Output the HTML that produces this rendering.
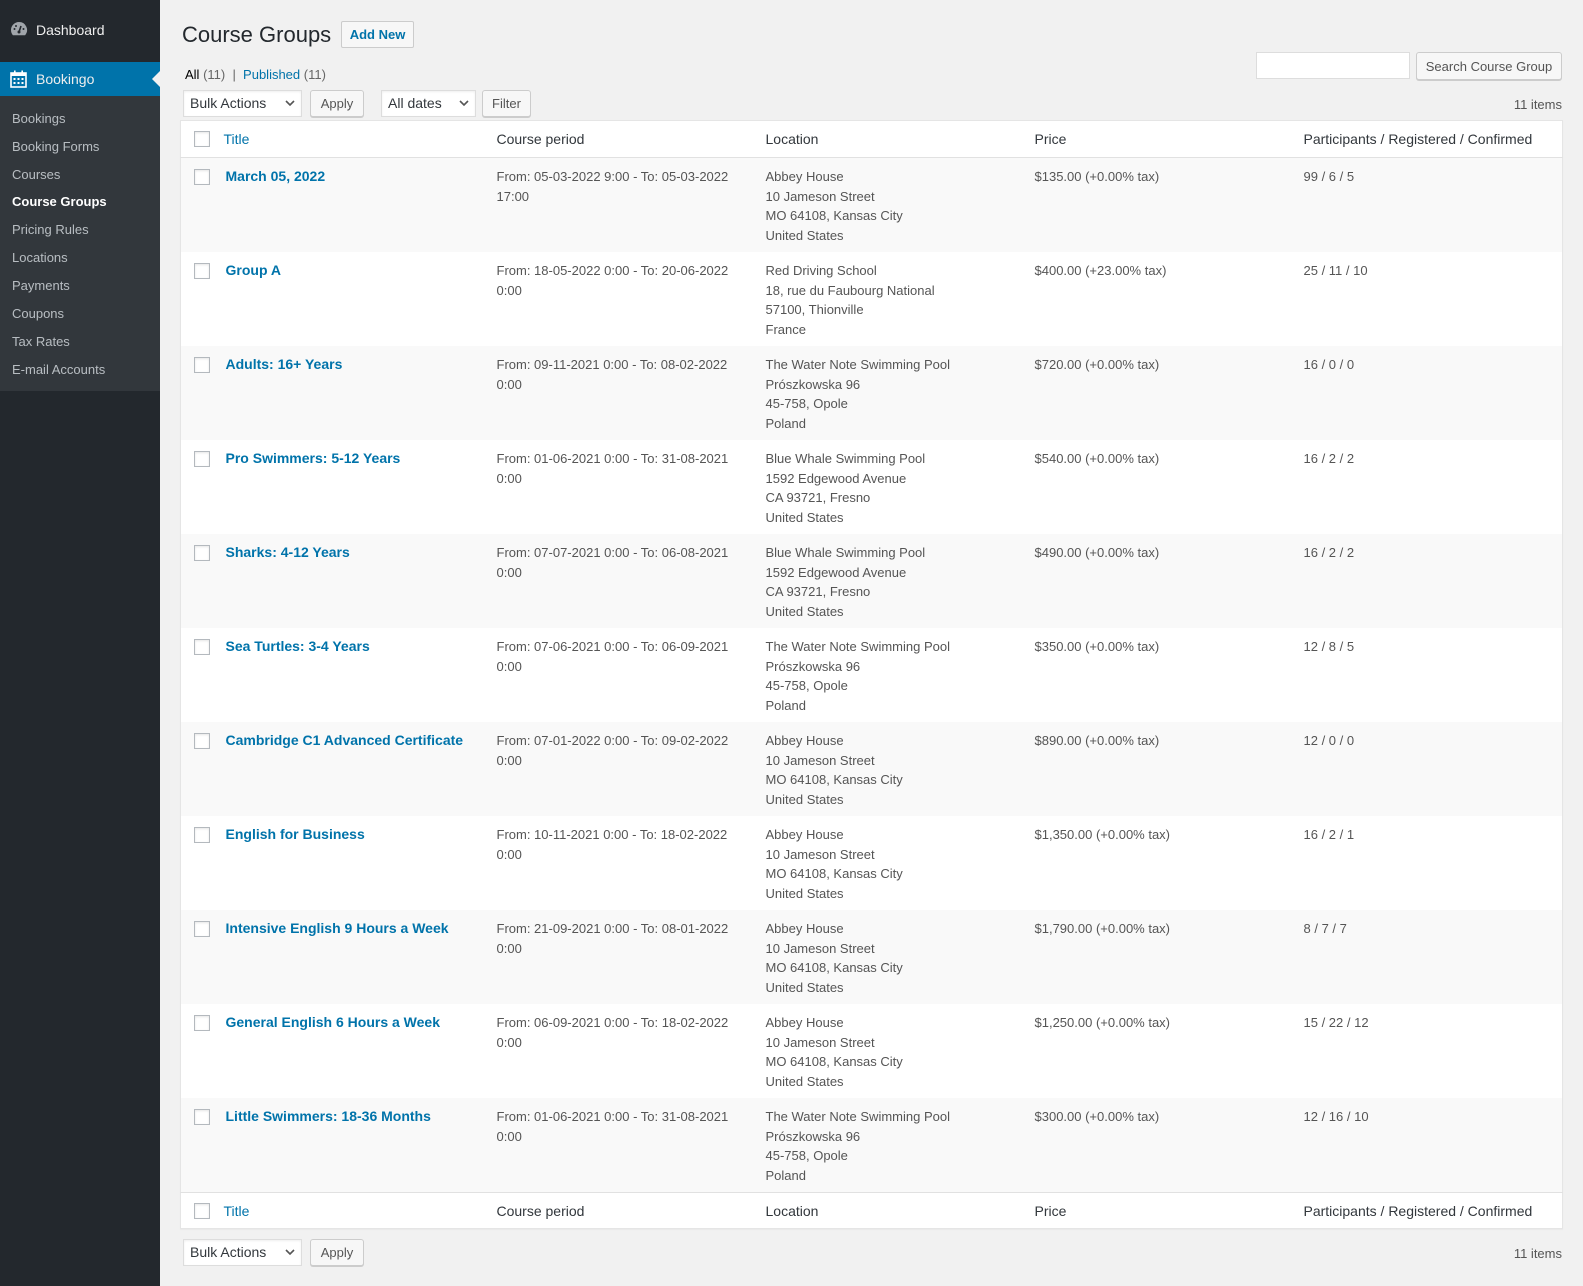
<!DOCTYPE html>
<html><head><meta charset="utf-8"><style>
*{box-sizing:border-box;margin:0;padding:0}
body{width:1583px;height:1286px;background:#f1f1f1;font-family:"Liberation Sans",sans-serif;font-size:13px;color:#444;position:relative;overflow:hidden}
#side{position:absolute;left:0;top:0;width:160px;height:1286px;background:#23282d}
.mi{position:absolute;left:0;width:160px;color:#eee;font-size:14px}
.sub{position:absolute;left:0;top:96px;width:160px;height:295px;background:#32373c}
.sub div{position:absolute;left:12px;color:rgba(240,245,250,.7);font-size:13px}
.sub div.cur{color:#fff;font-weight:bold}
a{color:#0073aa;text-decoration:none}
.abs{position:absolute}
.btn{position:absolute;background:#f7f7f7;border:1px solid #ccc;border-radius:3px;box-shadow:0 1px 0 #ccc;color:#555;font-size:13px;text-align:center;line-height:25px}
.sel{position:absolute;background:#fff;border:1px solid #ddd;box-shadow:inset 0 1px 2px rgba(0,0,0,.07);color:#32373c;font-size:14px;padding-left:6px;line-height:25px}
.sel svg{position:absolute;right:6px;top:9px}
table{position:absolute;left:180px;top:120px;width:1383px;border-collapse:collapse;background:#fff;border:1px solid #e5e5e5;box-shadow:0 1px 1px rgba(0,0,0,.04);table-layout:fixed}
th{font-weight:normal;text-align:left;font-size:14px;color:#32373c;height:37px;padding:0 10px;vertical-align:middle}
thead th{border-bottom:1px solid #e1e1e1}
tfoot th{border-top:1px solid #e1e1e1;height:36px}
td{vertical-align:top;padding:9px 10px 7px;line-height:19.5px;height:94px;font-size:13px;color:#555}
tbody tr:nth-child(odd){background:#f9f9f9}
th.cb,td.cb{padding:0 0 0 13px}
th.tt{padding-left:8px}
.cbx{width:16px;height:16px;border:1px solid #b4b9be;background:#fff;box-shadow:inset 0 1px 2px rgba(0,0,0,.1);display:block}
td.cb .cbx{margin-top:11px}
td.t{padding-left:10px}
td.t a{font-weight:bold;font-size:14px}
</style></head><body>
<div id="side">
 <div class="mi" style="top:0;height:62px">
  <svg class="abs" style="left:10px;top:21px" width="18" height="16" viewBox="0 0 18 16"><path d="M9 1A8 8 0 0 0 1 9c0 2 .7 3.8 1.9 5.2h12.2A8 8 0 0 0 9 1z" fill="#a0a5aa"/><path d="M9 11l2-6" stroke="#23282d" stroke-width="1.6"/><circle cx="9" cy="11" r="1.5" fill="#23282d"/><circle cx="4.5" cy="8" r="1" fill="#23282d"/><circle cx="6" cy="5" r="1" fill="#23282d"/><circle cx="13.5" cy="8" r="1" fill="#23282d"/></svg>
  <span class="abs" style="left:36px;top:22px">Dashboard</span></div>
 <div class="mi" style="top:62px;height:34px;background:#0073aa">
  <svg class="abs" style="left:10px;top:8px" width="17" height="18" viewBox="0 0 17 18"><rect x="1" y="3" width="15" height="14" fill="none" stroke="#fff" stroke-width="1.6"/><rect x="1" y="3" width="15" height="3" fill="#fff"/><rect x="4" y="0.5" width="1.6" height="4" fill="#fff"/><rect x="11.4" y="0.5" width="1.6" height="4" fill="#fff"/><g fill="#fff"><rect x="3.5" y="8" width="2" height="2"/><rect x="7.5" y="8" width="2" height="2"/><rect x="11.5" y="8" width="2" height="2"/><rect x="3.5" y="12" width="2" height="2"/><rect x="7.5" y="12" width="2" height="2"/><rect x="11.5" y="12" width="2" height="2"/></g></svg>
  <span class="abs" style="left:36px;top:9px">Bookingo</span>
  <div class="abs" style="right:0;top:9px;width:0;height:0;border:8px solid transparent;border-right-color:#f1f1f1"></div></div>
 <div class="sub">
  <div style="top:15px">Bookings</div><div style="top:43px">Booking Forms</div><div style="top:71px">Courses</div><div class="cur" style="top:98px">Course Groups</div><div style="top:126px">Pricing Rules</div><div style="top:154px">Locations</div><div style="top:182px">Payments</div><div style="top:210px">Coupons</div><div style="top:238px">Tax Rates</div><div style="top:266px">E-mail Accounts</div>
 </div>
</div>

<div class="abs" style="left:182px;top:22px;font-size:22px;color:#23282d">Course Groups</div>
<div class="abs" style="left:341px;top:21px;width:73px;height:27px;border:1px solid #ccc;background:#f7f7f7;border-radius:2px;color:#0073aa;font-weight:bold;font-size:13px;text-align:center;line-height:25px">Add New</div>
<div class="abs" style="left:185px;top:67px;font-size:13px;color:#666"><span style="color:#000">All</span> (11) &nbsp;|&nbsp; <a>Published</a> (11)</div>

<div class="abs" style="left:1256px;top:52px;width:154px;height:27px;background:#fff;border:1px solid #ddd"></div>
<div class="btn" style="left:1416px;top:52px;width:146px;height:28px;line-height:27px">Search Course Group</div>

<div class="sel" style="left:183px;top:90px;width:119px;height:27px">Bulk Actions<svg width="10" height="7" viewBox="0 0 10 7"><path d="M1 1l4 4 4-4" fill="none" stroke="#555" stroke-width="1.6"/></svg></div>
<div class="btn" style="left:310px;top:90px;width:54px;height:27px">Apply</div>
<div class="sel" style="left:381px;top:90px;width:95px;height:27px">All dates<svg width="10" height="7" viewBox="0 0 10 7"><path d="M1 1l4 4 4-4" fill="none" stroke="#555" stroke-width="1.6"/></svg></div>
<div class="btn" style="left:482px;top:90px;width:49px;height:27px">Filter</div>
<div class="abs" style="right:21px;top:97px;color:#555">11 items</div>

<table>
<colgroup><col style="width:35px"><col style="width:271px"><col style="width:269px"><col style="width:269px"><col style="width:269px"><col></colgroup>
<thead><tr><th class="cb"><span class="cbx"></span></th><th class="tt"><a>Title</a></th><th>Course period</th><th>Location</th><th>Price</th><th>Participants / Registered / Confirmed</th></tr></thead>
<tbody>
<tr><td class="cb"><span class="cbx"></span></td><td class="t"><a>March 05, 2022</a></td><td>From: 05-03-2022 9:00 - To: 05-03-2022 17:00</td><td>Abbey House<br>10 Jameson Street<br>MO 64108, Kansas City<br>United States</td><td>$135.00 (+0.00% tax)</td><td>99 / 6 / 5</td></tr>
<tr><td class="cb"><span class="cbx"></span></td><td class="t"><a>Group A</a></td><td>From: 18-05-2022 0:00 - To: 20-06-2022 0:00</td><td>Red Driving School<br>18, rue du Faubourg National<br>57100, Thionville<br>France</td><td>$400.00 (+23.00% tax)</td><td>25 / 11 / 10</td></tr>
<tr><td class="cb"><span class="cbx"></span></td><td class="t"><a>Adults: 16+ Years</a></td><td>From: 09-11-2021 0:00 - To: 08-02-2022 0:00</td><td>The Water Note Swimming Pool<br>Prószkowska 96<br>45-758, Opole<br>Poland</td><td>$720.00 (+0.00% tax)</td><td>16 / 0 / 0</td></tr>
<tr><td class="cb"><span class="cbx"></span></td><td class="t"><a>Pro Swimmers: 5-12 Years</a></td><td>From: 01-06-2021 0:00 - To: 31-08-2021 0:00</td><td>Blue Whale Swimming Pool<br>1592 Edgewood Avenue<br>CA 93721, Fresno<br>United States</td><td>$540.00 (+0.00% tax)</td><td>16 / 2 / 2</td></tr>
<tr><td class="cb"><span class="cbx"></span></td><td class="t"><a>Sharks: 4-12 Years</a></td><td>From: 07-07-2021 0:00 - To: 06-08-2021 0:00</td><td>Blue Whale Swimming Pool<br>1592 Edgewood Avenue<br>CA 93721, Fresno<br>United States</td><td>$490.00 (+0.00% tax)</td><td>16 / 2 / 2</td></tr>
<tr><td class="cb"><span class="cbx"></span></td><td class="t"><a>Sea Turtles: 3-4 Years</a></td><td>From: 07-06-2021 0:00 - To: 06-09-2021 0:00</td><td>The Water Note Swimming Pool<br>Prószkowska 96<br>45-758, Opole<br>Poland</td><td>$350.00 (+0.00% tax)</td><td>12 / 8 / 5</td></tr>
<tr><td class="cb"><span class="cbx"></span></td><td class="t"><a>Cambridge C1 Advanced Certificate</a></td><td>From: 07-01-2022 0:00 - To: 09-02-2022 0:00</td><td>Abbey House<br>10 Jameson Street<br>MO 64108, Kansas City<br>United States</td><td>$890.00 (+0.00% tax)</td><td>12 / 0 / 0</td></tr>
<tr><td class="cb"><span class="cbx"></span></td><td class="t"><a>English for Business</a></td><td>From: 10-11-2021 0:00 - To: 18-02-2022 0:00</td><td>Abbey House<br>10 Jameson Street<br>MO 64108, Kansas City<br>United States</td><td>$1,350.00 (+0.00% tax)</td><td>16 / 2 / 1</td></tr>
<tr><td class="cb"><span class="cbx"></span></td><td class="t"><a>Intensive English 9 Hours a Week</a></td><td>From: 21-09-2021 0:00 - To: 08-01-2022 0:00</td><td>Abbey House<br>10 Jameson Street<br>MO 64108, Kansas City<br>United States</td><td>$1,790.00 (+0.00% tax)</td><td>8 / 7 / 7</td></tr>
<tr><td class="cb"><span class="cbx"></span></td><td class="t"><a>General English 6 Hours a Week</a></td><td>From: 06-09-2021 0:00 - To: 18-02-2022 0:00</td><td>Abbey House<br>10 Jameson Street<br>MO 64108, Kansas City<br>United States</td><td>$1,250.00 (+0.00% tax)</td><td>15 / 22 / 12</td></tr>
<tr><td class="cb"><span class="cbx"></span></td><td class="t"><a>Little Swimmers: 18-36 Months</a></td><td>From: 01-06-2021 0:00 - To: 31-08-2021 0:00</td><td>The Water Note Swimming Pool<br>Prószkowska 96<br>45-758, Opole<br>Poland</td><td>$300.00 (+0.00% tax)</td><td>12 / 16 / 10</td></tr>
</tbody>
<tfoot><tr><th class="cb"><span class="cbx"></span></th><th class="tt"><a>Title</a></th><th>Course period</th><th>Location</th><th>Price</th><th>Participants / Registered / Confirmed</th></tr></tfoot>
</table>

<div class="sel" style="left:183px;top:1239px;width:119px;height:27px">Bulk Actions<svg width="10" height="7" viewBox="0 0 10 7"><path d="M1 1l4 4 4-4" fill="none" stroke="#555" stroke-width="1.6"/></svg></div>
<div class="btn" style="left:310px;top:1239px;width:54px;height:27px">Apply</div>
<div class="abs" style="right:21px;top:1246px;color:#555">11 items</div>
</body></html>
